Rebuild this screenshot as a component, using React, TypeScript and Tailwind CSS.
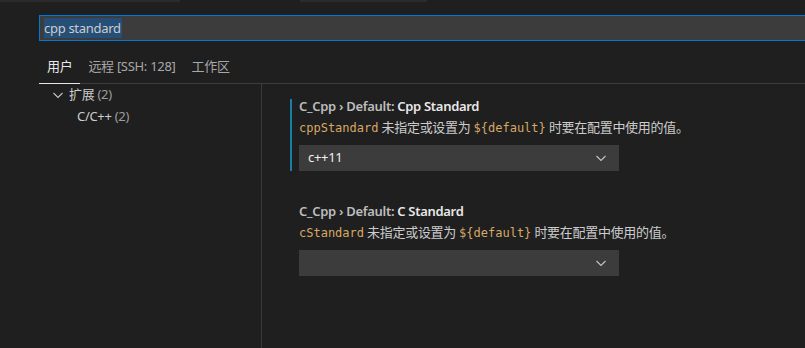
const font = { fontFamily: '"Noto Sans", "Noto Sans CJK SC", sans-serif' };

function Chevron({ className }: { className?: string }) {
  return (
    <svg width="16" height="16" viewBox="0 0 16 16" className={className} fill="none">
      <path d="M3.5 6l4.5 4.5L12.5 6" stroke="currentColor" strokeWidth="1.1" />
    </svg>
  );
}

function Code({ children }: { children: string }) {
  return (
    <span
      className="text-[#d7a866] text-[12px] tracking-normal"
      style={{ fontFamily: '"DejaVu Sans Mono", "Liberation Mono", monospace' }}
    >
      {children}
    </span>
  );
}

function Setting({
  label,
  keyName,
  value,
  focused,
}: {
  label: string;
  keyName: string;
  value: string;
  focused?: boolean;
}) {
  return (
    <div className={`ml-[28px] pl-[7px] border-l-2 ${focused ? "border-[#167fa5]" : "border-transparent"}`}>
      <div className="text-[13px] leading-[14px] font-semibold">
        <span className="text-[#bdbdbd]">C_Cpp › Default: </span>
        <span className="text-[#e8e8e8]">{label}</span>
      </div>
      <div className="mt-[5px] text-[13px] leading-[18px] text-[#cccccc]">
        <Code>{keyName}</Code> 未指定或设置为 <Code>{"${default}"}</Code> 时要在配置中使用的值。
      </div>
      <div className="mt-[8px] w-[320px] h-[26px] bg-[#3c3c3c] flex items-center justify-between pl-[9px] pr-[10px]">
        <span className="text-[13px] text-[#f0f0f0]">{value}</span>
        <Chevron className="text-[#c5c5c5]" />
      </div>
    </div>
  );
}

export default function App() {
  return (
    <div
      className="w-[805px] h-[348px] bg-[#1f1f1f] overflow-hidden flex flex-col tracking-[-0.3px]"
      style={font}
    >
      <div className="h-[2px] flex shrink-0">
        <div className="w-[180px] bg-[#2b2b2b]" />
        <div className="w-[120px]" />
        <div className="w-[127px] bg-[#2b2b2b]" />
      </div>

      <div className="mt-[13px] ml-[39px] w-[768px] h-[26px] shrink-0 border border-[#0078d4] bg-[#3c3c3c] flex items-center pl-[4px]">
        <span className="bg-[#264f78] text-[#cccccc] text-[13px] leading-[20px] pr-[1px]">cpp standard</span>
      </div>

      <div className="mt-[15px] ml-[39px] flex border-b border-[#3c3c3c] shrink-0 text-[13px] leading-[20px]">
        <div className="px-[8px] pb-[7px] border-b border-[#e7e7e7] -mb-px text-[#e7e7e7]">用户</div>
        <div className="px-[8px] pb-[7px] text-[#a8a8a8]">远程 [SSH: 128]</div>
        <div className="px-[8px] pb-[7px] text-[#a8a8a8]">工作区</div>
      </div>

      <div className="flex flex-1 min-h-0">
        <div className="w-[262px] border-r border-[#3a3a3a] text-[13px]">
          <div className="h-[22px] flex items-center pl-[50px] gap-[3px]">
            <Chevron className="text-[#c5c5c5]" />
            <span className="text-[#cccccc]">
              扩展 <span className="text-[#9d9d9d]">(2)</span>
            </span>
          </div>
          <div className="h-[22px] flex items-center pl-[77px]">
            <span className="text-[#cccccc]">
              C/C++ <span className="text-[#9d9d9d]">(2)</span>
            </span>
          </div>
        </div>

        <div className="flex-1 pt-[15px] flex flex-col gap-[33px]">
          <Setting label="Cpp Standard" keyName="cppStandard" value="c++11" focused />
          <Setting label="C Standard" keyName="cStandard" value="" />
        </div>
      </div>
    </div>
  );
}
